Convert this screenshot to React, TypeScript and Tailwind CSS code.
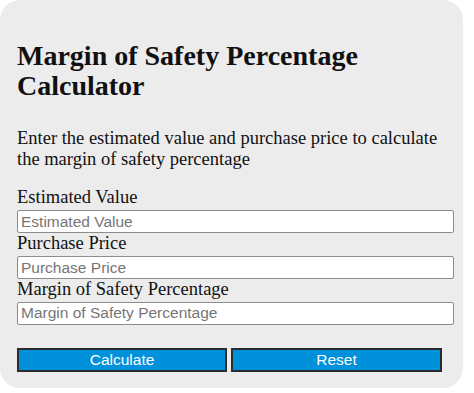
import React from "react";

export default function App() {
  const serif = { fontFamily: '"Liberation Serif", "Times New Roman", serif' };
  const sans = { fontFamily: '"Liberation Sans", Arial, sans-serif' };
  return (
    <div className="w-[474px] h-[393px] bg-white">
      <div
        className="w-[463px] bg-[#ececec] rounded-[20px] pl-[17px] pr-[17px] pt-[41px] pb-[16px] text-[#111]"
        style={serif}
      >
        <h1 className="text-[28px] leading-[30px] font-bold m-0">
          Margin of Safety Percentage Calculator
        </h1>
        <p className="text-[18.5px] leading-[20.7px] mt-[27px] mb-[18px]">
          Enter the estimated value and purchase price to calculate the margin of safety percentage
        </p>
        {["Estimated Value", "Purchase Price", "Margin of Safety Percentage"].map((l) => (
          <div key={l} className="flex flex-col">
            <label className="text-[18.5px] leading-[20.7px] mb-[2px]">{l}</label>
            <input
              type="text"
              placeholder={l}
              className="w-[437px] h-[23px] bg-white border border-[#8d8d8d] rounded-[2px] px-[3px] text-[15.5px] text-[#111] placeholder:text-[#767676] outline-none"
              style={sans}
            />
          </div>
        ))}
        <div className="flex gap-[4px] mt-[23px]">
          <button
            className="w-[210px] h-[24px] bg-[#0091da] border-2 border-[#2b2b2b] text-white text-[15.5px] leading-none"
            style={sans}
          >
            Calculate
          </button>
          <button
            className="w-[211px] h-[24px] bg-[#0091da] border-2 border-[#2b2b2b] text-white text-[15.5px] leading-none"
            style={sans}
          >
            Reset
          </button>
        </div>
      </div>
    </div>
  );
}
